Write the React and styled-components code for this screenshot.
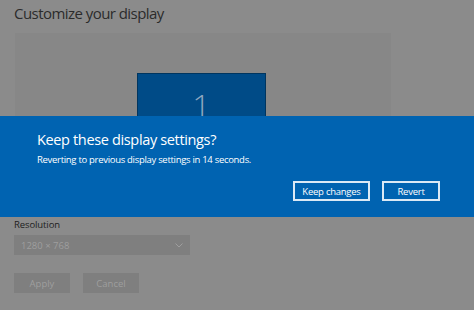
import React from "react";
import styled, { createGlobalStyle } from "styled-components";

const Global = createGlobalStyle`
  html, body { margin: 0; padding: 0; background: #8b8b8b; }
  body { font-family: "Open Sans", "Noto Sans", sans-serif; overflow: hidden; }
`;

const Page = styled.div`
  position: relative;
  width: 474px;
  height: 310px;
  background: #8b8b8b;
  padding: 0 0 0 14px;
  box-sizing: border-box;
  display: flex;
  flex-direction: column;
`;

const Heading = styled.h1`
  margin: 0;
  padding-top: 3px;
  height: 30px;
  font-size: 15px;
  line-height: 20px;
  font-weight: 400;
  color: #2b2b2b;
  letter-spacing: -0.55px;
`;

const Preview = styled.div`
  margin-left: 1px;
  width: 376px;
  height: 180px;
  background: #878787;
  padding: 40px 0 0 122px;
  box-sizing: border-box;
`;

const Monitor = styled.div`
  width: 129px;
  height: 90px;
  background: #004b87;
  border: 1px solid #00355f;
  box-sizing: border-box;
  display: flex;
  justify-content: center;
  padding-top: 15px;
  font-size: 32px;
  font-weight: 300;
  color: #8ea6bf;
  line-height: 1;
`;

const Label = styled.div`
  margin-top: 5px;
  font-size: 9.5px;
  line-height: 14px;
  color: #1e1e1e;
  height: 17px;
  letter-spacing: -0.1px;
`;

const Select = styled.div`
  width: 176px;
  height: 20px;
  background: #7f7f7f;
  display: flex;
  align-items: center;
  justify-content: space-between;
  padding: 0 7px;
  box-sizing: border-box;
  font-size: 9.5px;
  color: #9e9e9e;
`;

const Row = styled.div`
  display: flex;
  gap: 13px;
  margin-top: 18px;
`;

const DimButton = styled.div`
  width: 56px;
  height: 20px;
  background: #7f7f7f;
  display: flex;
  align-items: center;
  justify-content: center;
  font-size: 9.5px;
  color: #9e9e9e;
`;

const Dialog = styled.div`
  position: absolute;
  top: 116px;
  left: 0;
  right: 0;
  height: 101px;
  background: #0063b1;
  padding: 14px 34px 0 37px;
  box-sizing: border-box;
  display: flex;
  flex-direction: column;
  color: #ffffff;
`;

const Title = styled.div`
  font-size: 14.5px;
  line-height: 20px;
  font-weight: 400;
  letter-spacing: -0.35px;
`;

const Sub = styled.div`
  margin-top: 3px;
  font-size: 9.5px;
  line-height: 13px;
  letter-spacing: -0.3px;
`;

const Actions = styled.div`
  display: flex;
  justify-content: flex-end;
  gap: 12px;
  margin-top: 15px;
`;

const OutlineButton = styled.button`
  width: ${(p) => p.$w}px;
  height: 20px;
  background: #0063b1;
  border: 2px solid #dbe9f5;
  box-sizing: border-box;
  color: #ffffff;
  font-family: inherit;
  font-size: 9.5px;
  letter-spacing: -0.25px;
  padding: 0;
  display: flex;
  align-items: center;
  justify-content: center;
`;

export default function App() {
  return (
    <>
      <Global />
      <Page>
        <Heading>Customize your display</Heading>
        <Preview>
          <Monitor>1</Monitor>
        </Preview>
        <Label>Resolution</Label>
        <Select>
          <span>1280 × 768</span>
          <svg width="8" height="5" viewBox="0 0 8 5">
            <path d="M0.5 0.5 L4 4 L7.5 0.5" fill="none" stroke="#9e9e9e" strokeWidth="1" />
          </svg>
        </Select>
        <Row>
          <DimButton>Apply</DimButton>
          <DimButton>Cancel</DimButton>
        </Row>
        <Dialog>
          <Title>Keep these display settings?</Title>
          <Sub>Reverting to previous display settings in 14 seconds.</Sub>
          <Actions>
            <OutlineButton $w={77}>Keep changes</OutlineButton>
            <OutlineButton $w={58}>Revert</OutlineButton>
          </Actions>
        </Dialog>
      </Page>
    </>
  );
}
